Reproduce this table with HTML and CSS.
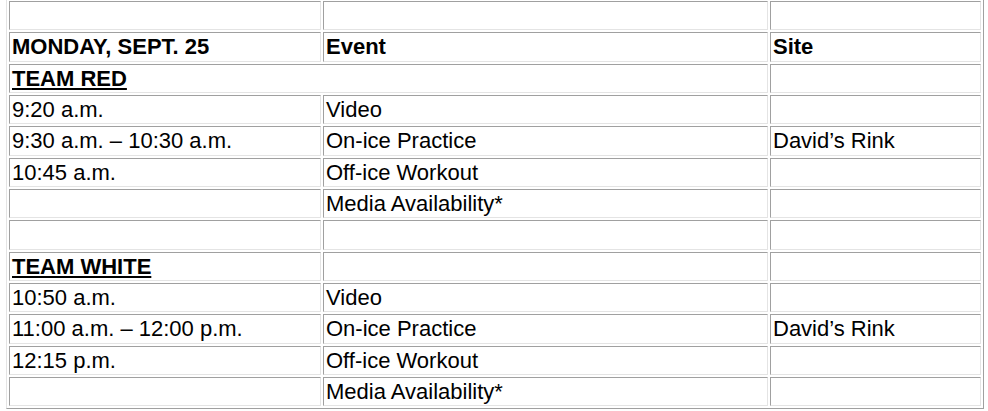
FILE: index.html
```html
<!DOCTYPE html>
<html>
<head>
<meta charset="utf-8">
<link rel="stylesheet" href="styles.css">
</head>
<body>
<table class="sched">
  <colgroup>
    <col class="c1"><col class="c2"><col class="c3">
  </colgroup>
  <tr><td>&nbsp;</td><td>&nbsp;</td><td>&nbsp;</td></tr>
  <tr class="head"><td>MONDAY, SEPT. 25</td><td>Event</td><td>Site</td></tr>
  <tr><td colspan="2" class="team">TEAM RED</td><td>&nbsp;</td></tr>
  <tr><td>9:20 a.m.</td><td>Video</td><td>&nbsp;</td></tr>
  <tr><td>9:30 a.m. – 10:30 a.m.</td><td>On-ice Practice</td><td>David’s Rink</td></tr>
  <tr><td>10:45 a.m.</td><td>Off-ice Workout</td><td>&nbsp;</td></tr>
  <tr><td>&nbsp;</td><td>Media Availability*</td><td>&nbsp;</td></tr>
  <tr><td>&nbsp;</td><td>&nbsp;</td><td>&nbsp;</td></tr>
  <tr><td class="team">TEAM WHITE</td><td>&nbsp;</td><td>&nbsp;</td></tr>
  <tr><td>10:50 a.m.</td><td>Video</td><td>&nbsp;</td></tr>
  <tr><td>11:00 a.m. – 12:00 p.m.</td><td>On-ice Practice</td><td>David’s Rink</td></tr>
  <tr><td>12:15 p.m.</td><td>Off-ice Workout</td><td>&nbsp;</td></tr>
  <tr><td>&nbsp;</td><td>Media Availability*</td><td>&nbsp;</td></tr>
</table>
</body>
</html>
```
FILE: styles.css
```css
html, body {
  margin: 0;
  padding: 0;
  background: #ffffff;
}

body {
  font-family: "Liberation Sans", Arial, sans-serif;
  font-size: 22px;
  color: #000000;
}

.sched {
  margin: -2px 0 0 6px;
  width: 976px;
  table-layout: fixed;
  border-collapse: separate;
  border-spacing: 2px;
  border-style: solid;
  border-width: 1px;
  border-color: #e4e4e4 #a0a0a0 #a0a0a0 #e4e4e4;
}

.c1 { width: 312px; }
.c2 { width: 445px; }
.c3 { width: 211px; }

.sched td {
  padding: 1px 2px;
  border-style: solid;
  border-width: 1px;
  border-color: #a0a0a0 #e4e4e4 #e4e4e4 #a0a0a0;
  white-space: nowrap;
  line-height: 25.33px;
  vertical-align: middle;
}

.head td {
  font-weight: bold;
}

.sched td.team {
  font-weight: bold;
  text-decoration: underline;
  text-decoration-thickness: 2px;
  text-underline-offset: 2px;
}
```
